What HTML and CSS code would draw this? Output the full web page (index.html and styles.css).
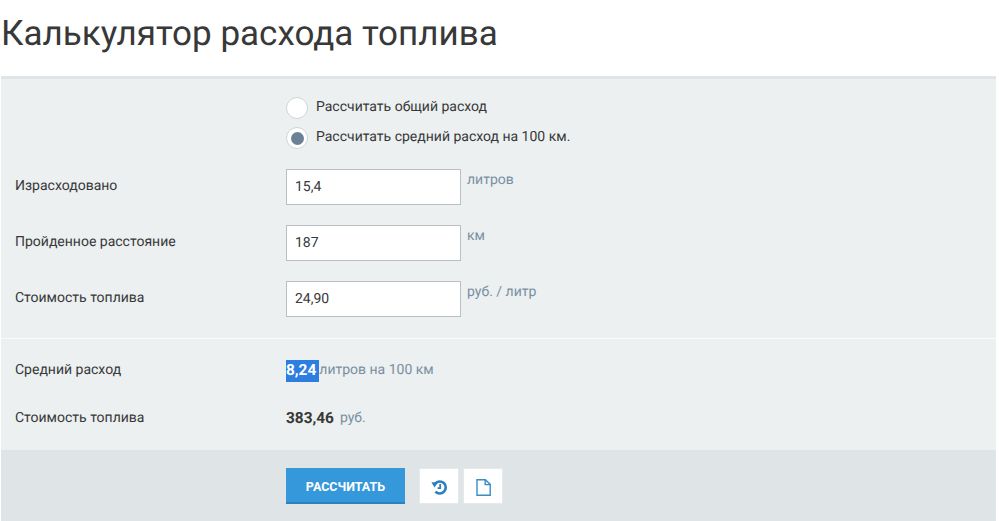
FILE: index.html
```html
<!DOCTYPE html>
<html lang="ru">
<head>
<meta charset="utf-8">
<title>Калькулятор расхода топлива</title>
<link rel="stylesheet" href="styles.css">
</head>
<body>
<h1 class="title">Калькулятор расхода топлива</h1>
<div class="panel">
  <div class="inputs">
    <div class="radios">
      <label class="radio-row"><span class="radio"></span>Рассчитать общий расход</label>
      <label class="radio-row"><span class="radio is-on"></span>Рассчитать средний расход на 100 км.</label>
    </div>
    <div class="field">
      <span class="label">Израсходовано</span>
      <span class="box">15,4</span>
      <span class="unit">литров</span>
    </div>
    <div class="field">
      <span class="label">Пройденное расстояние</span>
      <span class="box">187</span>
      <span class="unit">км</span>
    </div>
    <div class="field">
      <span class="label">Стоимость топлива</span>
      <span class="box">24,90</span>
      <span class="unit">руб. / литр</span>
    </div>
  </div>
  <div class="results">
    <div class="result">
      <span class="label">Средний расход</span>
      <span class="value is-selected">8,24</span><span class="unit-inline is-tight">литров на 100 км</span>
    </div>
    <div class="result">
      <span class="label">Стоимость топлива</span>
      <span class="value">383,46</span><span class="unit-inline">руб.</span>
    </div>
  </div>
  <div class="actions">
    <button class="primary" type="button"><span class="primary-text">РАССЧИТАТЬ</span></button>
    <button class="icon-btn" type="button" aria-label="История">
      <svg width="17" height="15" viewBox="0 0 17 15"><path d="M4.2 3.6A6 6 0 1 1 4.4 11.6" fill="none" stroke="#2b7fc0" stroke-width="2.6"/><path d="M0.4 2.2H7L3.6 7.6Z" fill="#2b7fc0"/><path d="M9.2 4V8.2H6.6" fill="none" stroke="#2b7fc0" stroke-width="1.8"/></svg>
    </button>
    <button class="icon-btn" type="button" aria-label="Новый">
      <svg width="15" height="17" viewBox="0 0 15 17"><path d="M1 .8H9.4L14.2 5.4V16.2H1Z" fill="none" stroke="#3a8cc9" stroke-width="1.4"/><path d="M9.2 .8V5.6H14.2" fill="none" stroke="#3a8cc9" stroke-width="1.4"/></svg>
    </button>
  </div>
</div>
</body>
</html>
```
FILE: styles.css
```css
* { box-sizing: border-box; }
html, body { margin: 0; padding: 0; background: #fff; }
body {
  font-family: Roboto, "Liberation Sans", sans-serif;
  font-size: 14px;
  color: #383838;
  height: 521px;
  overflow: hidden;
  text-rendering: geometricPrecision;
}
.title {
  margin: 0;
  padding: 14px 0 0 1px;
  height: 76px;
  font-size: 35px;
  line-height: 40px;
  font-weight: 400;
  color: #383838;
}
.panel {
  margin: 0 3px 0 1px;
  background: #ecf0f1;
  border-top: 3px solid #dfe5e6;
}
.inputs { padding: 18px 0 21px 14px; }
.radios {
  margin-left: 271px;
  display: flex;
  flex-direction: column;
  gap: 8px;
  margin-bottom: 20px;
}
.radio-row { display: flex; align-items: flex-start; height: 22px; gap: 8px; line-height: 20px; }
.radio {
  width: 22px; height: 22px; border-radius: 50%;
  background: #fff; border: 1px solid #cfd5d7;
  display: flex; align-items: center; justify-content: center;
}
.radio.is-on::after {
  content: ""; width: 13px; height: 13px; border-radius: 50%; background: #6b8296;
}
.field { display: flex; align-items: flex-start; height: 36px; margin-bottom: 20px; }
.field:last-child { margin-bottom: 0; }
.label { width: 271px; flex: none; line-height: 34px; }
.box {
  width: 175px; height: 36px; flex: none;
  background: #fff; border: 1px solid #b9c0c4;
  padding-left: 8px; line-height: 34px;
}
.unit { margin-left: 6px; color: #7a8fa1; line-height: 22px; }
.results {
  border-top: 1px solid #fafbfb;
  padding: 15px 0 16px 14px;
}
.result { display: flex; align-items: center; height: 32px; margin-bottom: 16px; }
.result:last-child { margin-bottom: 0; }
.value { font-weight: 700; font-size: 15.4px; }
.value.is-selected { background: #2c7fe0; color: #fff; padding-right: 3px; height: 22px; line-height: 20px; margin-top: 2px; }
.unit-inline { color: #7a8fa1; margin-left: 6px; }
.unit-inline.is-tight { margin-left: 0; }
.actions {
  background: #dfe5e6;
  height: 72px;
  padding: 18px 0 0 285px;
  display: flex;
  align-items: flex-start;
}
.primary {
  width: 119px; height: 36px;
  background: #3498db; color: #fff;
  border: 0; border-bottom: 2px solid #2d80bb;
  font: 700 12.5px Roboto, sans-serif;
  padding: 2px 0 0; margin-right: 14px;
}
.icon-btn {
  width: 40px; height: 36px; margin-right: 4px;
  background: #fff; border: 1px solid #e4e9ea; padding: 2px 0 0;
  display: flex; align-items: center; justify-content: center;
}
```
